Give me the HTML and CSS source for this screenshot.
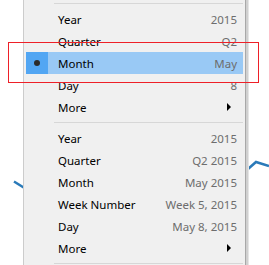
FILE: index.html
```html
<!DOCTYPE html>
<html>
<head>
<meta charset="utf-8">
<link rel="stylesheet" href="styles.css">
</head>
<body>
<div class="stage">
  <svg class="chart" width="269" height="265" viewBox="0 0 269 265">
    <polyline points="14,181.5 26,189" fill="none" stroke="#2a7ab9" stroke-width="2.5"/>
    <polyline points="240,176 256,162 269,166" fill="none" stroke="#2a7ab9" stroke-width="2.5"/>
  </svg>
  <div class="menu">
    <div class="sep"></div>
    <div class="item"><span class="check"></span><span class="label">Year</span><span class="value">2015</span></div>
    <div class="item"><span class="check"></span><span class="label">Quarter</span><span class="value">Q2</span></div>
    <div class="item active"><span class="check"><span class="dot"></span></span><span class="label">Month</span><span class="value">May</span></div>
    <div class="item"><span class="check"></span><span class="label">Day</span><span class="value">8</span></div>
    <div class="item"><span class="check"></span><span class="label">More</span><span class="arrow"></span></div>
    <div class="sep"></div>
    <div class="item"><span class="check"></span><span class="label">Year</span><span class="value">2015</span></div>
    <div class="item"><span class="check"></span><span class="label">Quarter</span><span class="value">Q2 2015</span></div>
    <div class="item"><span class="check"></span><span class="label">Month</span><span class="value">May 2015</span></div>
    <div class="item"><span class="check"></span><span class="label">Week Number</span><span class="value">Week 5, 2015</span></div>
    <div class="item"><span class="check"></span><span class="label">Day</span><span class="value">May 8, 2015</span></div>
    <div class="item"><span class="check"></span><span class="label">More</span><span class="arrow"></span></div>
    <div class="sep"></div>
  </div>
  <div class="focus-box"></div>
</div>
</body>
</html>
```

FILE: styles.css
```css
html, body {
  margin: 0;
  padding: 0;
  background: #ffffff;
  overflow: hidden;
}
.stage {
  position: relative;
  width: 269px;
  height: 265px;
  overflow: hidden;
  font-family: "Noto Sans", "Open Sans", sans-serif;
  font-size: 11.5px;
}
.chart {
  position: absolute;
  left: 0;
  top: 0;
}
.menu {
  position: relative;
  margin-left: 23px;
  width: 217px;
  padding: 0 2px 20px 2px;
  background: #f0f0f0;
  border-left: 1px solid #cccccc;
  border-right: 1px solid #a8a8a8;
  box-shadow: 2px 0 0 #d0d0d0, 3px 0 0 #e6e6e6;
  display: flex;
  flex-direction: column;
}
.sep {
  height: 1px;
  background: #d7d7d7;
  margin: 4px 0 4px 28px;
}
.menu > .sep:first-child {
  margin-top: 3px;
}
.item {
  height: 22px;
  display: flex;
  align-items: center;
  color: #000000;
}
.check {
  width: 22px;
  height: 22px;
  flex: none;
  display: flex;
  align-items: center;
  justify-content: center;
}
.label {
  margin-left: 10px;
  flex: 1;
  white-space: nowrap;
}
.value {
  margin-right: 6px;
  color: #6d6d6d;
  white-space: nowrap;
}
.arrow {
  width: 0;
  height: 0;
  margin-right: 12px;
  border-top: 4px solid transparent;
  border-bottom: 4px solid transparent;
  border-left: 4px solid #000000;
}
.item.active {
  background: #99c9f5;
}
.item.active .check {
  background: #52a6f3;
}
.dot {
  width: 6px;
  height: 6px;
  border-radius: 50%;
  background: #2b2b2b;
}
.focus-box {
  position: absolute;
  left: 8px;
  top: 42px;
  width: 249px;
  height: 39px;
  border: 1px solid #ee2028;
}
```
